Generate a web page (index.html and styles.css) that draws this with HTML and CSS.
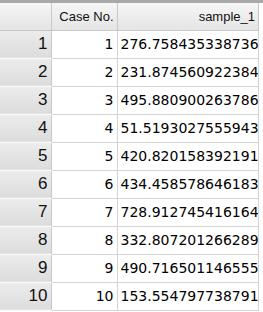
FILE: index.html
```html
<!DOCTYPE html>
<html>
<head>
<meta charset="utf-8">
<link rel="stylesheet" href="styles.css">
</head>
<body>
<div class="topbar"></div>
<table class="grid">
  <thead>
    <tr>
      <th class="corner"></th>
      <th class="colhead case">Case No.</th>
      <th class="colhead sample">sample_1</th>
    </tr>
  </thead>
  <tbody>
    <tr><th class="rowhead">1</th><td class="num">1</td><td class="val">276.758435338736</td></tr>
    <tr><th class="rowhead">2</th><td class="num">2</td><td class="val">231.874560922384</td></tr>
    <tr><th class="rowhead">3</th><td class="num">3</td><td class="val">495.880900263786</td></tr>
    <tr><th class="rowhead">4</th><td class="num">4</td><td class="val">51.5193027555943</td></tr>
    <tr><th class="rowhead">5</th><td class="num">5</td><td class="val">420.820158392191</td></tr>
    <tr><th class="rowhead">6</th><td class="num">6</td><td class="val">434.458578646183</td></tr>
    <tr><th class="rowhead">7</th><td class="num">7</td><td class="val">728.912745416164</td></tr>
    <tr><th class="rowhead">8</th><td class="num">8</td><td class="val">332.807201266289</td></tr>
    <tr><th class="rowhead">9</th><td class="num">9</td><td class="val">490.716501146555</td></tr>
    <tr><th class="rowhead">10</th><td class="num">10</td><td class="val">153.554797738791</td></tr>
  </tbody>
</table>
</body>
</html>
```
FILE: styles.css
```css
html, body {
  margin: 0;
  padding: 0;
  background: #ffffff;
  overflow: hidden;
}
.topbar {
  height: 3px;
  background: #a9a9a9;
}
.grid {
  border-collapse: collapse;
  table-layout: fixed;
  width: 259px;
}
.grid th, .grid td {
  padding: 0 3px;
  height: 28px;
  box-sizing: border-box;
  white-space: nowrap;
  overflow: hidden;
}
.grid thead th {
  height: 27px;
}
.corner, .colhead {
  background: linear-gradient(#f6f6f6, #e4e4e4);
  border-right: 1px solid #c8c8c8;
  border-bottom: 1px solid #c8c8c8;
  font-family: "Liberation Sans", Arial, sans-serif;
  font-size: 13px;
  font-weight: normal;
  color: #111;
  text-align: right;
}
.corner { width: 51px; }
.case { width: 66px; }
.rowhead {
  background: linear-gradient(#ececec, #dcdcdc);
  border-right: 1px solid #c8c8c8;
  border-bottom: 1px solid #f8f8f8;
  font-family: "Liberation Sans", Arial, sans-serif;
  font-size: 17px;
  font-weight: normal;
  color: #111;
  text-align: right;
}
.num, .val {
  border-right: 1px solid #d4d4d4;
  border-bottom: 1px solid #d4d4d4;
  font-family: "DejaVu Sans", Verdana, sans-serif;
  font-size: 14px;
  color: #000;
  text-align: right;
  padding-right: 2px;
}
```
